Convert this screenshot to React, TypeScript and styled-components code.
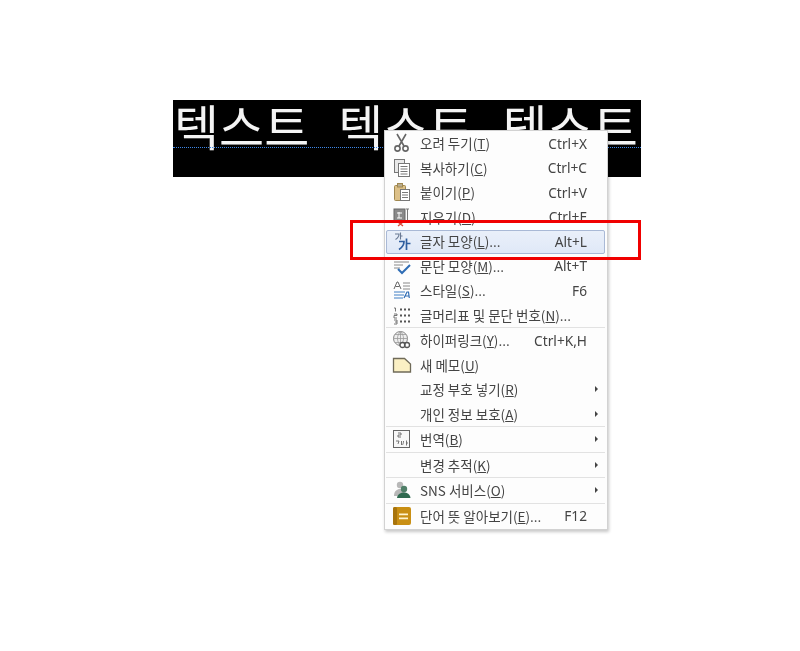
import React from "react";
import styled, { createGlobalStyle } from "styled-components";

const Global = createGlobalStyle`
  html, body { margin: 0; padding: 0; background: #fff; }
  body { font-family: "Noto Sans CJK KR", "Noto Sans", sans-serif; }
`;

const Stage = styled.div`
  position: relative;
  width: 800px;
  height: 651px;
  padding: 100px 0 0 173px;
  box-sizing: border-box;
  overflow: hidden;
`;

const Banner = styled.div`
  position: relative;
  width: 468px;
  height: 77px;
  background: #000;
  filter: blur(0.35px);
`;

const BannerText = styled.div`
  display: flex;
  gap: 29px;
  padding-left: 1px;
  color: #f4f4f4;
  font-family: "Noto Sans CJK KR", sans-serif;
  font-weight: 400;
  font-size: 49px;
  line-height: 50px;
  white-space: nowrap;
`;

const Baseline = styled.div`
  position: absolute;
  left: 0;
  right: 0;
  top: 47px;
  border-top: 1.5px dotted #3c86e6;
`;

const Menu = styled.div`
  position: absolute;
  left: 384px;
  top: 130px;
  width: 224px;
  height: 400px;
  box-sizing: border-box;
  padding: 0.5px 2px 0 1px;
  display: flex;
  flex-direction: column;
  background: #fdfdfd;
  border: 1px solid #d2d2d2;
  box-shadow: 1px 2px 3px rgba(0, 0, 0, 0.22);
  color: #444;
  font-size: 13.5px;
  filter: blur(0.35px);
`;

const Row = styled.div<{ $active?: boolean; $divider?: boolean }>`
  position: relative;
  flex: 0 0 auto;
  height: 24.5px;
  box-sizing: border-box;
  padding-bottom: 1.5px;
  display: grid;
  grid-template-columns: 32px 1fr auto 10px;
  align-items: center;
  white-space: nowrap;
  border-radius: 2px;
  ${(p) =>
    p.$divider &&
    `margin-top: 1px;
     &::before {
       content: "";
       position: absolute;
       left: 0;
       right: 0;
       top: -1.5px;
       height: 1px;
       background: #e2e2e2;
     }`}
  ${(p) =>
    p.$active &&
    `background: linear-gradient(#eaf0fa, #dfe8f7); outline: 1px solid #a9b9d6; outline-offset: -1px;`}
`;

const IconCell = styled.span`
  display: flex;
  justify-content: center;
  align-items: center;
`;

const Label = styled.span`
  padding-left: 2px;
`;

const Key = styled.span`
  font-family: "Noto Sans", sans-serif;
  font-size: 13.7px;
  padding-right: 8px;
`;

const Arrow = styled.span`
  width: 0;
  height: 0;
  border-left: 3.5px solid #444;
  border-top: 3px solid transparent;
  border-bottom: 3px solid transparent;
  justify-self: start;
`;

const Highlight = styled.div`
  position: absolute;
  left: 350px;
  top: 220px;
  width: 291px;
  height: 40px;
  box-sizing: border-box;
  border: 3.5px solid #f00000;
`;

const Ico = styled.svg`
  width: 20px;
  height: 20px;
  display: block;
`;

const Cut = () => (
  <Ico viewBox="0 0 20 20" fill="none" stroke="#666" strokeWidth="1.6">
    <path d="M5 1l7 12M14 1l-7 12" />
    <circle cx="5.5" cy="15.5" r="2.6" />
    <circle cx="13.5" cy="15.5" r="2.6" />
  </Ico>
);
const Copy = () => (
  <Ico viewBox="0 0 20 20" fill="#fff" stroke="#777">
    <rect x="2.5" y="1.5" width="10" height="13" fill="#e8e8e8" />
    <rect x="6.5" y="5.5" width="11" height="13" />
    <path d="M8.5 8.5h7M8.5 11h7M8.5 13.5h7M8.5 16h7" />
  </Ico>
);
const Paste = () => (
  <Ico viewBox="0 0 20 20" stroke="#a08850">
    <rect x="2.5" y="3.5" width="11" height="15" fill="#dcc088" rx="1" />
    <rect x="5.5" y="1.5" width="5" height="3.5" fill="#b8ac90" />
    <rect x="8.5" y="7.5" width="9" height="11" fill="#fff" stroke="#777" />
    <path d="M10 10.5h6M10 13h6M10 15.5h6" stroke="#777" />
  </Ico>
);
const Erase = () => (
  <Ico viewBox="0 0 20 20" fill="none">
    <rect x="2" y="2" width="11" height="12" fill="#8a8a8a" stroke="#666" />
    <path d="M5 6h5M7 5v6M5 11h5" stroke="#fff" />
    <path d="M14 2h3M15.500 2v12M14 14h3" stroke="#777" />
    <path d="M6 15l5 4M11 15l-5 4" stroke="#d84a3a" strokeWidth="1.4" />
  </Ico>
);
const CharShape = () => (
  <Ico viewBox="0 0 20 20" fill="none">
    <path d="M3 3h4c0 2.500-1 4-3.500 5.500M8.500 1.500v7M8.500 5h2" stroke="#6a7a94" strokeWidth="1.100" />
    <path d="M7 10.500h5c0 3.500-2 6-5 8M14.500 7.500v11.500M14.500 12.500h4" stroke="#2f5e9e" strokeWidth="1.700" />
  </Ico>
);
const Para = () => (
  <Ico viewBox="0 0 20 20" fill="none">
    <path d="M2 3h12M2 6h15M2 9h9M2 12h6" stroke="#888" />
    <path d="M6 13l4 4 8-8" stroke="#2f6db5" strokeWidth="2" />
  </Ico>
);
const StyleIc = () => (
  <Ico viewBox="0 0 20 20" fill="none">
    <path d="M2 9l3-7h1l3 7M3.500 6.500h4" stroke="#666" />
    <path d="M11 3h7M11 6h7M11 9h7" stroke="#888" />
    <path d="M2 12h11M2 15h10M2 18h9" stroke="#3f7fc4" />
    <path d="M12 18l3-6h1.500l.8 6M13.500 16h3.500" stroke="#2f6db5" strokeWidth="1.2" />
  </Ico>
);
const Bullets = () => (
  <Ico viewBox="0 0 20 20" fill="none" stroke="#666">
    <path d="M2 3h1.500v3.500M2 9h3v1.500H2V13h3M2 15h3v4H2M3 17h2" strokeWidth="0.9" />
    <path d="M8 4.500h2M12 4.500h2M16 4.500h2M8 10.500h2M12 10.500h2M16 10.500h2M8 16.500h2M12 16.500h2M16 16.500h2" strokeWidth="1.800" stroke="#555" />
  </Ico>
);
const Link = () => (
  <Ico viewBox="0 0 20 20" fill="none">
    <circle cx="8.500" cy="8.500" r="7" fill="#eee" stroke="#888" />
    <path d="M1.500 8.500h14M8.500 1.500v14M3 4.500h11M3 12.500h11M8.500 1.500c-4 4-4 10 0 14M8.500 1.500c4 4 4 10 0 14" stroke="#999" strokeWidth="0.8" />
    <circle cx="10.500" cy="15" r="2.500" fill="#fff" stroke="#555" strokeWidth="1.300" />
    <circle cx="15" cy="15" r="2.500" fill="none" stroke="#555" strokeWidth="1.300" />
  </Ico>
);
const Memo = () => (
  <Ico viewBox="0 0 20 20">
    <path d="M1.500 3.500h11l6 5.500v8h-17z" fill="#fbf0c4" stroke="#6f6a58" strokeWidth="1.300" />
  </Ico>
);
const Translate = () => (
  <Ico viewBox="0 0 20 20" fill="none" stroke="#666">
    <rect x="1.500" y="1.500" width="16" height="17" fill="#f8f8f8" />
    <path d="M6 4h3v2H6v2h3M4 12h3l-1 3M9.500 12v4M11.500 12c0 2-.5 3-1 4M14.500 11.500v5M14.500 14h1.500" strokeWidth="0.9" />
  </Ico>
);
const People = () => (
  <Ico viewBox="0 0 20 20">
    <circle cx="8" cy="5" r="3.200" fill="#b8b8b8" />
    <path d="M2 16c0-5 3-7 6-7s5 2 5 7z" fill="#b8b8b8" />
    <circle cx="12" cy="9" r="3.200" fill="#4f7f68" />
    <path d="M5 18c.5-4 4-5.500 7-5.500s6 1.500 6.500 5.500z" fill="#2f6a50" />
  </Ico>
);
const Dict = () => (
  <Ico viewBox="0 0 20 20">
    <rect x="1" y="1" width="18" height="18" rx="2" fill="#c98f14" />
    <rect x="1" y="1" width="4" height="18" rx="1.500" fill="#a8740c" />
    <path d="M7 7.500h9v1.800H7zM7 11.500h9v1.800H7z" fill="#fff4d0" />
  </Ico>
);

type Item = { icon?: React.ReactNode; ko: string; k?: string; tail?: string; sc?: string; sub?: boolean; active?: boolean; divider?: boolean };

const items: Item[] = [
  { icon: <Cut />, ko: "오려 두기", k: "T", sc: "Ctrl+X" },
  { icon: <Copy />, ko: "복사하기", k: "C", sc: "Ctrl+C" },
  { icon: <Paste />, ko: "붙이기", k: "P", sc: "Ctrl+V" },
  { icon: <Erase />, ko: "지우기", k: "D", sc: "Ctrl+E" },
  { icon: <CharShape />, ko: "글자 모양", k: "L", tail: "...", sc: "Alt+L", active: true },
  { icon: <Para />, ko: "문단 모양", k: "M", tail: "...", sc: "Alt+T" },
  { icon: <StyleIc />, ko: "스타일", k: "S", tail: "...", sc: "F6" },
  { icon: <Bullets />, ko: "글머리표 및 문단 번호", k: "N", tail: "..." },
  { icon: <Link />, ko: "하이퍼링크", k: "Y", tail: "...", sc: "Ctrl+K,H", divider: true },
  { icon: <Memo />, ko: "새 메모", k: "U" },
  { ko: "교정 부호 넣기", k: "R", sub: true },
  { ko: "개인 정보 보호", k: "A", sub: true },
  { icon: <Translate />, ko: "번역", k: "B", sub: true, divider: true },
  { ko: "변경 추적", k: "K", sub: true, divider: true },
  { icon: <People />, ko: "SNS 서비스", k: "O", sub: true, divider: true },
  { icon: <Dict />, ko: "단어 뜻 알아보기", k: "E", tail: "...", sc: "F12", divider: true },
];

export default function App() {
  return (
    <Stage>
      <Global />
      <Banner>
        <BannerText>
          <span>텍스트</span>
          <span>텍스트</span>
          <span>텍스트</span>
        </BannerText>
        <Baseline />
      </Banner>
      <Menu>
        {items.map((it) => (
          <Row key={it.ko} $active={it.active} $divider={it.divider}>
            <IconCell>{it.icon}</IconCell>
            <Label>
              {it.ko}(<u>{it.k}</u>){it.tail}
            </Label>
            <Key>{it.sc}</Key>
            {it.sub ? <Arrow /> : <span />}
          </Row>
        ))}
      </Menu>
      <Highlight />
    </Stage>
  );
}
